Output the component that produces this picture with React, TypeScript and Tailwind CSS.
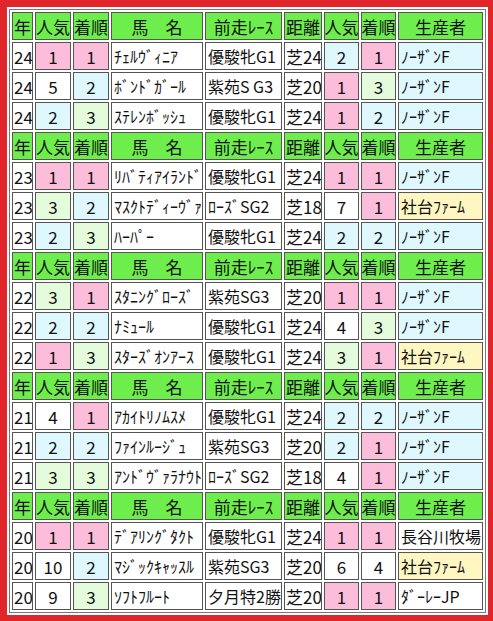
type Row = {
  y: string
  pop: number
  rank: number
  name: string
  race: string
  dist: string
  pPop: number
  pRank: number
  breeder: string
}

const groups: Row[][] = [
  [
    { y: "24", pop: 1, rank: 1, name: "ﾁｪﾙｳﾞｨﾆｱ", race: "優駿牝G1", dist: "芝24", pPop: 2, pRank: 1, breeder: "ﾉｰｻﾞﾝF" },
    { y: "24", pop: 5, rank: 2, name: "ﾎﾞﾝﾄﾞｶﾞｰﾙ", race: "紫苑S G3", dist: "芝20", pPop: 1, pRank: 3, breeder: "ﾉｰｻﾞﾝF" },
    { y: "24", pop: 2, rank: 3, name: "ｽﾃﾚﾝﾎﾞｯｼｭ", race: "優駿牝G1", dist: "芝24", pPop: 1, pRank: 2, breeder: "ﾉｰｻﾞﾝF" },
  ],
  [
    { y: "23", pop: 1, rank: 1, name: "ﾘﾊﾞﾃｨｱｲﾗﾝﾄﾞ", race: "優駿牝G1", dist: "芝24", pPop: 1, pRank: 1, breeder: "ﾉｰｻﾞﾝF" },
    { y: "23", pop: 3, rank: 2, name: "ﾏｽｸﾄﾃﾞｨｰｳﾞｧ", race: "ﾛｰｽﾞSG2", dist: "芝18", pPop: 7, pRank: 1, breeder: "社台ﾌｧｰﾑ" },
    { y: "23", pop: 2, rank: 3, name: "ﾊｰﾊﾟｰ", race: "優駿牝G1", dist: "芝24", pPop: 2, pRank: 2, breeder: "ﾉｰｻﾞﾝF" },
  ],
  [
    { y: "22", pop: 3, rank: 1, name: "ｽﾀﾆﾝｸﾞﾛｰｽﾞ", race: "紫苑SG3", dist: "芝20", pPop: 1, pRank: 1, breeder: "ﾉｰｻﾞﾝF" },
    { y: "22", pop: 2, rank: 2, name: "ﾅﾐｭｰﾙ", race: "優駿牝G1", dist: "芝24", pPop: 4, pRank: 3, breeder: "ﾉｰｻﾞﾝF" },
    { y: "22", pop: 1, rank: 3, name: "ｽﾀｰｽﾞｵﾝｱｰｽ", race: "優駿牝G1", dist: "芝24", pPop: 3, pRank: 1, breeder: "社台ﾌｧｰﾑ" },
  ],
  [
    { y: "21", pop: 4, rank: 1, name: "ｱｶｲﾄﾘﾉﾑｽﾒ", race: "優駿牝G1", dist: "芝24", pPop: 2, pRank: 2, breeder: "ﾉｰｻﾞﾝF" },
    { y: "21", pop: 2, rank: 2, name: "ﾌｧｲﾝﾙｰｼﾞｭ", race: "紫苑SG3", dist: "芝20", pPop: 2, pRank: 1, breeder: "ﾉｰｻﾞﾝF" },
    { y: "21", pop: 3, rank: 3, name: "ｱﾝﾄﾞｳﾞｧﾗﾅｳﾄ", race: "ﾛｰｽﾞSG2", dist: "芝18", pPop: 4, pRank: 1, breeder: "ﾉｰｻﾞﾝF" },
  ],
  [
    { y: "20", pop: 1, rank: 1, name: "ﾃﾞｱﾘﾝｸﾞﾀｸﾄ", race: "優駿牝G1", dist: "芝24", pPop: 1, pRank: 1, breeder: "長谷川牧場" },
    { y: "20", pop: 10, rank: 2, name: "ﾏｼﾞｯｸｷｬｯｽﾙ", race: "紫苑SG3", dist: "芝20", pPop: 6, pRank: 4, breeder: "社台ﾌｧｰﾑ" },
    { y: "20", pop: 9, rank: 3, name: "ｿﾌﾄﾌﾙｰﾄ", race: "夕月特2勝", dist: "芝20", pPop: 1, pRank: 1, breeder: "ﾀﾞｰﾚｰJP" },
  ],
]

// 1はピンク、2は水色、3は薄緑
const numBg = (n: number) =>
  n === 1 ? "bg-[#fbbdd9]" : n === 2 ? "bg-[#def8fe]" : n === 3 ? "bg-[#e4fcdc]" : "bg-white"

const breederBg = (b: string) =>
  b === "ﾉｰｻﾞﾝF" ? "bg-[#def8fe]" : b === "社台ﾌｧｰﾑ" ? "bg-[#fff7c2]" : "bg-white"

const cell = "border border-[#555] h-[28px] flex items-center whitespace-nowrap overflow-hidden"
const head = `${cell} bg-[#6dee4d] justify-center`
const num = `${cell} justify-center`
const txt = `${cell} bg-white pl-[2px]`

const headers = ["年", "人気", "着順", "馬　名", "前走ﾚｰｽ", "距離", "人気", "着順", "生産者"]

export default function App() {
  return (
    <div
      className="bg-white border-t-[7px] border-l-[7px] border-r-[5px] border-b-[6px] border-[#e0262b] p-[2px] text-[#111] text-[17px] leading-none"
      style={{ fontFamily: '"Noto Sans CJK JP", "Noto Sans", sans-serif' }}
    >
      <div className="border border-[#777] p-[2px] grid grid-cols-[21px_36px_36px_92px_77px_38px_35px_35px_minmax(0,1fr)] gap-[2px]">
        {groups.map((g, gi) => [
          ...headers.map((h, hi) => (
            <div key={`h${gi}-${hi}`} className={head}>
              {h}
            </div>
          )),
          ...g.flatMap((r, ri) => [
            <div key={`${gi}-${ri}-y`} className={`${cell} bg-white pl-[1px]`}>{r.y}</div>,
            <div key={`${gi}-${ri}-p`} className={`${num} ${numBg(r.pop)}`}>{r.pop}</div>,
            <div key={`${gi}-${ri}-r`} className={`${num} ${numBg(r.rank)}`}>{r.rank}</div>,
            <div key={`${gi}-${ri}-n`} className={`${txt} text-[16px]`}>{r.name}</div>,
            <div key={`${gi}-${ri}-c`} className={`${txt} text-[16px]`}>{r.race}</div>,
            <div key={`${gi}-${ri}-d`} className={`${cell} bg-white pl-[1px]`}>{r.dist}</div>,
            <div key={`${gi}-${ri}-pp`} className={`${num} ${numBg(r.pPop)}`}>{r.pPop}</div>,
            <div key={`${gi}-${ri}-pr`} className={`${num} ${numBg(r.pRank)}`}>{r.pRank}</div>,
            <div key={`${gi}-${ri}-b`} className={`${cell} ${breederBg(r.breeder)} pl-[2px] text-[16px]`}>
              {r.breeder}
            </div>,
          ]),
        ])}
      </div>
    </div>
  )
}
